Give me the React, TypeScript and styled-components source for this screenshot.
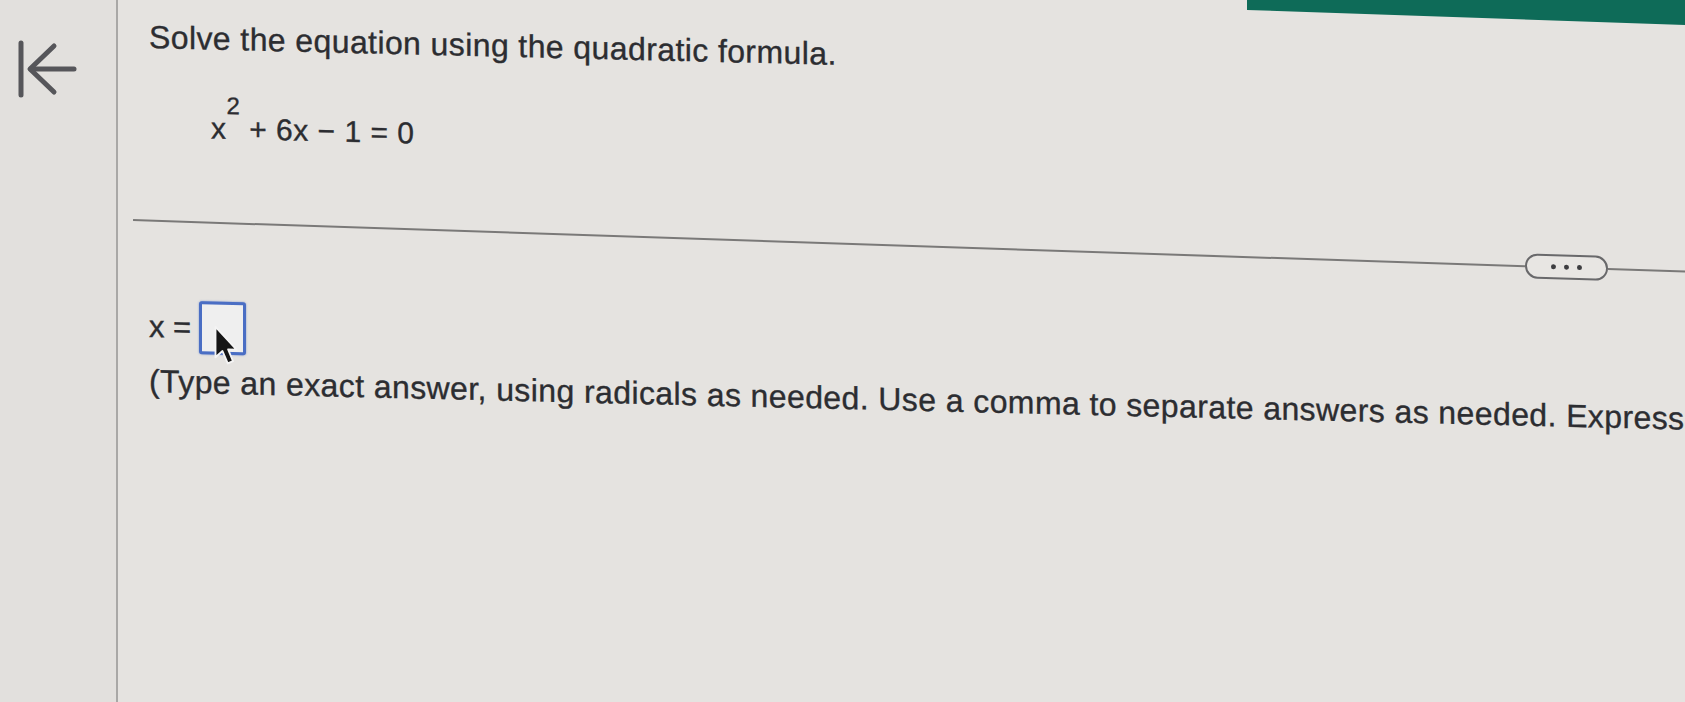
import styled, { createGlobalStyle } from 'styled-components'

const GlobalStyle = createGlobalStyle`
  html, body {
    margin: 0;
    padding: 0;
  }
  body {
    background: #e5e3e0;
    font-family: "Liberation Sans", Arial, sans-serif;
    color: #2c2d31;
  }
`

const Page = styled.div`
  display: flex;
  width: 100vw;
  height: 100vh;
  overflow: hidden;
  background: #e5e3e0;
`

const Sidebar = styled.aside`
  flex: 0 0 118px;
  box-sizing: border-box;
  padding: 40px 0 0 16px;
  border-right: 2px solid #a9a8a6;
  background: #e2e0dd;
`

const BackButton = styled.button`
  display: block;
  padding: 0;
  border: 0;
  background: none;
  color: #56565a;
  cursor: pointer;
`

const Main = styled.main`
  position: relative;
  flex: 1;
  overflow: hidden;
`

// edge of the green header bar peeking in at the top right
const HeaderEdge = styled.div`
  position: absolute;
  top: 0;
  right: 0;
  width: 438px;
  height: 25px;
  background: #0e6b58;
  clip-path: polygon(0 0, 100% 0, 100% 100%, 0 40%);
`

// the photo is taken at a slight angle, so the question body leans a little
const Content = styled.div`
  padding: 21px 0 0 31px;
  transform: skewY(1.4deg);
  transform-origin: 31px 0;
  -webkit-text-stroke: 0.35px currentColor;
`

const Prompt = styled.h1`
  margin: 0;
  font-size: 32px;
  line-height: 32px;
  font-weight: 400;
  letter-spacing: 0.4px;
  white-space: nowrap;
`

const Equation = styled.div`
  margin-top: 59px;
  padding-left: 62px;
  font-size: 30px;
  line-height: 30px;
  letter-spacing: 0.5px;
  white-space: nowrap;

  sup {
    position: relative;
    top: -25px;
    font-size: 24px;
    line-height: 0;
    vertical-align: baseline;
  }
`

const RuleRow = styled.div`
  display: flex;
  align-items: center;
  height: 25px;
  margin: 78px 0 0 -16px;
  transform: rotate(0.5deg);
  transform-origin: calc(100% - 119px) 50%;
`

const Rule = styled.div<{ $width?: number }>`
  flex: ${p => (p.$width ? `0 0 ${p.$width}px` : '1')};
  height: 2px;
  background: #7a7978;
`

const MoreButton = styled.button`
  flex: 0 0 83px;
  height: 25px;
  box-sizing: border-box;
  display: flex;
  align-items: center;
  justify-content: center;
  gap: 8px;
  padding: 0;
  border: 2px solid #69696b;
  border-radius: 13px;
  background: #e8e6e3;
  cursor: pointer;
`

const Dot = styled.span`
  width: 5px;
  height: 5px;
  border-radius: 50%;
  background: #3d3d40;
`

const AnswerRow = styled.div`
  display: flex;
  align-items: center;
  margin-top: 55px;
  font-size: 31px;
  line-height: 31px;
`

const Label = styled.span`
  margin-right: 8px;
`

const BoxWrap = styled.span`
  position: relative;
  display: inline-block;
`

const AnswerBox = styled.input`
  display: block;
  width: 47px;
  height: 53px;
  box-sizing: border-box;
  padding: 0;
  border: 3px solid #4a6ec4;
  border-radius: 3px;
  background: #efefef;
  box-shadow: 0 0 2px rgba(74, 110, 196, 0.7);
  outline: none;
`

const Pointer = styled.svg`
  position: absolute;
  left: 14px;
  top: 23px;
  pointer-events: none;
`

const Hint = styled.p`
  margin: 12px 0 0;
  font-size: 32px;
  line-height: 32px;
  letter-spacing: 0.4px;
  white-space: nowrap;
`

function App() {
  return (
    <>
      <GlobalStyle />
      <Page>
        <Sidebar>
          <BackButton aria-label="Back">
            <svg width="62" height="58" viewBox="0 0 62 58" fill="none" stroke="currentColor" strokeWidth="5" strokeLinecap="round" strokeLinejoin="round">
              <path d="M5 3V55" />
              <path d="M38 6L14 29L38 52" />
              <path d="M15 29H58" />
            </svg>
          </BackButton>
        </Sidebar>
        <Main>
          <HeaderEdge />
          <Content>
            <Prompt>Solve the equation using the quadratic formula.</Prompt>
            <Equation>
              x<sup>2</sup> + 6x − 1 = 0
            </Equation>
            <RuleRow>
              <Rule />
              <MoreButton aria-label="More">
                <Dot />
                <Dot />
                <Dot />
              </MoreButton>
              <Rule $width={77} />
            </RuleRow>
            <AnswerRow>
              <Label>x =</Label>
              <BoxWrap>
                <AnswerBox type="text" />
                <Pointer width="26" height="42" viewBox="0 0 22 36">
                  <path d="M2 2L2 28L8 22.5L12.5 33L17 31L12.8 21L20 21Z" fill="#151515" stroke="#f4f4f4" strokeWidth="1.6" strokeLinejoin="round" />
                </Pointer>
              </BoxWrap>
            </AnswerRow>
            <Hint>(Type an exact answer, using radicals as needed. Use a comma to separate answers as needed. Express</Hint>
          </Content>
        </Main>
      </Page>
    </>
  )
}

export default App
